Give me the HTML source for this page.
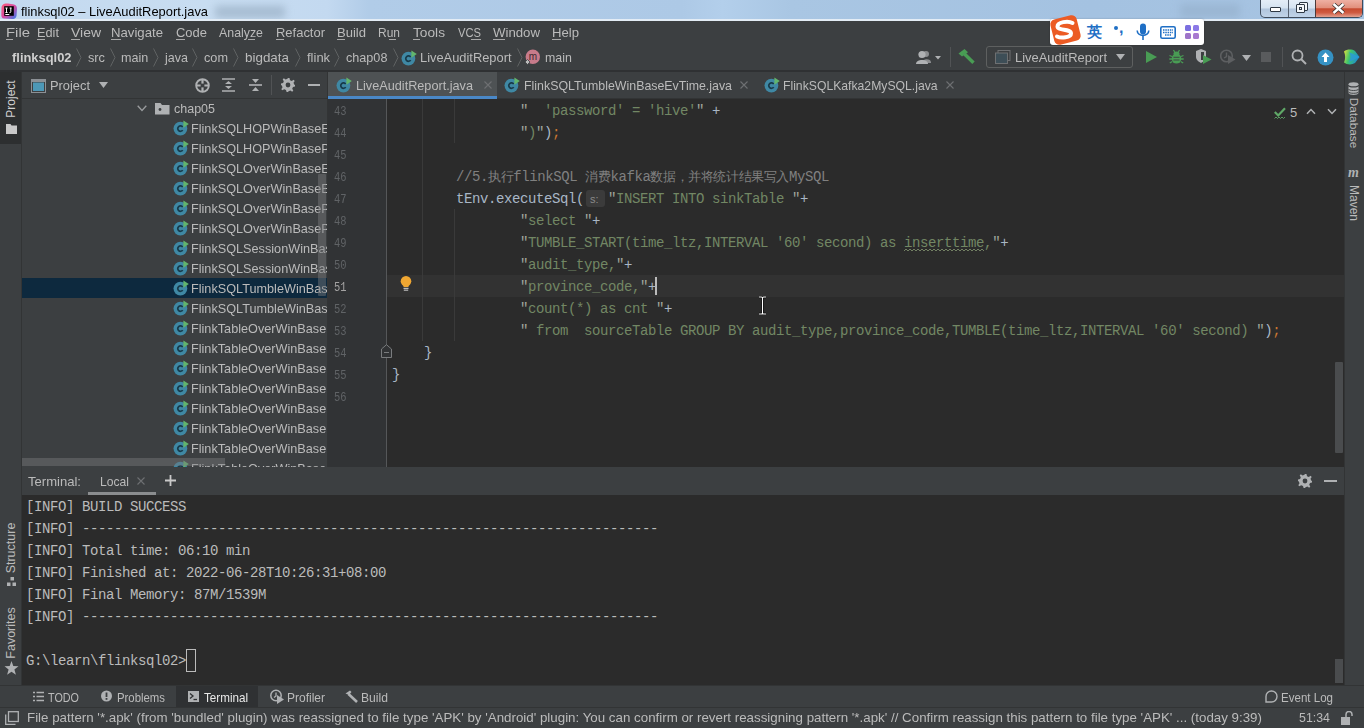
<!DOCTYPE html>
<html><head><meta charset="utf-8"><title>IDE</title><style>*{margin:0;padding:0;box-sizing:border-box}
html,body{width:1364px;height:728px;overflow:hidden;background:#3c3f41;font-family:"Liberation Sans",sans-serif;font-size:13px;color:#bbbbbb;position:relative}
.a{position:absolute}
.t{white-space:pre}
.mono{font-family:"Liberation Mono",monospace;font-size:14px;letter-spacing:-0.4px;line-height:22px;white-space:pre;color:#a9b7c6;margin-top:1px}
.tm{color:#bbbbbb}
.s{color:#728764}
.c{color:#808080}
.k{color:#cc7832}
.q{color:#a0a69c}
.cjk{font-size:13.3px;letter-spacing:-0.4px}
</style></head><body>
<div class="a" style="left:0;top:0;width:1364px;height:21px;background:linear-gradient(90deg,#c3d9ef 0%,#c8ddf1 15%,#c3d9f0 24%,#b1cce8 27%,#adc9e6 50%,#b3cfeb 53%,#a9c6e3 58%,#a4c2e1 80%,#a7c4e2 100%)"></div>
<div class="a" style="left:215px;top:6px;width:70px;height:12px;background:#8aa0b6;filter:blur(4px);opacity:.55"></div>
<div class="a" style="left:1180px;top:4px;width:60px;height:14px;background:#8fa9c4;filter:blur(4px);opacity:.5"></div>
<div class="a" style="left:0;top:19px;width:1364px;height:2px;background:#e3ecf5"></div>
<svg class="a" style="left:1px;top:3px" width="16" height="16" viewBox="0 0 16 16"><defs><linearGradient id="ijg" x1="0" y1="0" x2="1" y2="1"><stop offset="0" stop-color="#fc5f7a"/><stop offset=".5" stop-color="#d84aa0"/><stop offset="1" stop-color="#2f7ff0"/></linearGradient></defs><path d="M0.5 5 C0.5 1 4 0 7 0.5 L13 1.5 C15.5 2 16 4 16 6 L15.5 13 C15 15.5 13 16 11 16 L3 15.5 C1 15.3 0.3 14 0.3 12Z" fill="url(#ijg)"/><rect x="3.2" y="3.2" width="9.6" height="9.6" fill="#000"/><rect x="4.3" y="11" width="4" height="1" fill="#fff"/><path d="M4.4 5 H6.6 M5.5 5 V9.5 M4.4 9.5 H6.6 M8.6 5 H10.6 M9.8 5 V8.8 C9.8 9.6 9.2 9.8 8.4 9.6" stroke="#fff" stroke-width="1" fill="none"/></svg>
<div class="a" style="left:1260px;top:0;width:103px;height:18px;border:1px solid #3f4b5b;border-top:none;border-radius:0 0 5px 5px;overflow:hidden;background:linear-gradient(#e4edf7 0%,#d5e3f1 48%,#b1c5dc 52%,#c0d3e8 100%)">
  <div class="a" style="left:54px;top:0;width:48px;height:17px;background:linear-gradient(#eeb0a3 0%,#e2907d 45%,#c64a30 52%,#cf5b42 75%,#e3a190 100%);border-left:1px solid #4b3a3a"></div>
  <div class="a" style="left:27px;top:0;width:1px;height:17px;background:#55606f"></div>
  <div class="a" style="left:9px;top:7px;width:11px;height:5px;background:#fff;border:1px solid #2f3945;border-radius:1px"></div>
  <div class="a" style="left:38px;top:2px;width:9px;height:9px;border:1px solid #2f3945;background:#f4f7fa;border-radius:1px"></div>
  <div class="a" style="left:35px;top:4px;width:9px;height:9px;border:1px solid #2f3945;background:#f4f7fa;border-radius:1px"></div>
  <div class="a" style="left:38px;top:7px;width:3px;height:3px;border:1px solid #2f3945"></div>
  <svg class="a" style="left:71px;top:3px" width="13" height="11" viewBox="0 0 13 11"><path d="M1.5 1 L11.5 10 M11.5 1 L1.5 10" stroke="#38302f" stroke-width="4"/><path d="M1.5 1 L11.5 10 M11.5 1 L1.5 10" stroke="#fff" stroke-width="2.4"/></svg>
</div>
<div class="a" style="left:0;top:21px;width:1364px;height:51px;background:#3c3f41"></div>
<div class="a" style="left:6px;top:39px;width:7px;height:1px;background:#a8a8a8"></div>
<div class="a" style="left:37px;top:39px;width:8px;height:1px;background:#a8a8a8"></div>
<div class="a" style="left:71px;top:39px;width:9px;height:1px;background:#a8a8a8"></div>
<div class="a" style="left:111px;top:39px;width:10px;height:1px;background:#a8a8a8"></div>
<div class="a" style="left:176px;top:39px;width:9px;height:1px;background:#a8a8a8"></div>
<div class="a" style="left:248px;top:39px;width:7px;height:1px;background:#a8a8a8"></div>
<div class="a" style="left:276px;top:39px;width:8px;height:1px;background:#a8a8a8"></div>
<div class="a" style="left:337px;top:39px;width:8px;height:1px;background:#a8a8a8"></div>
<div class="a" style="left:389px;top:39px;width:7px;height:1px;background:#a8a8a8"></div>
<div class="a" style="left:413px;top:39px;width:7px;height:1px;background:#a8a8a8"></div>
<div class="a" style="left:471px;top:39px;width:10px;height:1px;background:#a8a8a8"></div>
<div class="a" style="left:493px;top:39px;width:12px;height:1px;background:#a8a8a8"></div>
<div class="a" style="left:552px;top:39px;width:9px;height:1px;background:#a8a8a8"></div>
<svg class="a" style="left:76px;top:48px" width="6" height="19" viewBox="0 0 6 19"><path d="M0.5 0.5 L5 9.5 L0.5 18.5" stroke="#5f6263" stroke-width="1" fill="none"/></svg>
<svg class="a" style="left:109.5px;top:48px" width="6" height="19" viewBox="0 0 6 19"><path d="M0.5 0.5 L5 9.5 L0.5 18.5" stroke="#5f6263" stroke-width="1" fill="none"/></svg>
<svg class="a" style="left:153px;top:48px" width="6" height="19" viewBox="0 0 6 19"><path d="M0.5 0.5 L5 9.5 L0.5 18.5" stroke="#5f6263" stroke-width="1" fill="none"/></svg>
<svg class="a" style="left:192px;top:48px" width="6" height="19" viewBox="0 0 6 19"><path d="M0.5 0.5 L5 9.5 L0.5 18.5" stroke="#5f6263" stroke-width="1" fill="none"/></svg>
<svg class="a" style="left:233px;top:48px" width="6" height="19" viewBox="0 0 6 19"><path d="M0.5 0.5 L5 9.5 L0.5 18.5" stroke="#5f6263" stroke-width="1" fill="none"/></svg>
<svg class="a" style="left:295px;top:48px" width="6" height="19" viewBox="0 0 6 19"><path d="M0.5 0.5 L5 9.5 L0.5 18.5" stroke="#5f6263" stroke-width="1" fill="none"/></svg>
<svg class="a" style="left:334px;top:48px" width="6" height="19" viewBox="0 0 6 19"><path d="M0.5 0.5 L5 9.5 L0.5 18.5" stroke="#5f6263" stroke-width="1" fill="none"/></svg>
<svg class="a" style="left:393px;top:48px" width="6" height="19" viewBox="0 0 6 19"><path d="M0.5 0.5 L5 9.5 L0.5 18.5" stroke="#5f6263" stroke-width="1" fill="none"/></svg>
<svg class="a" style="left:516.5px;top:48px" width="6" height="19" viewBox="0 0 6 19"><path d="M0.5 0.5 L5 9.5 L0.5 18.5" stroke="#5f6263" stroke-width="1" fill="none"/></svg>
<svg class="a" style="left:401px;top:50px" width="16" height="16" viewBox="0 0 16 16"><circle cx="7.4" cy="8.6" r="6.9" fill="#3f88a4"/><path d="M9.7 7.1 A2.7 2.7 0 1 0 9.7 10.1" stroke="#183a4a" stroke-width="1.7" fill="none"/><path d="M10.4 0.4 L15.8 4.1 L10.4 7.8 Z" fill="#62b56d"/></svg>
<svg class="a" style="left:524px;top:49px" width="17" height="17" viewBox="0 0 17 17"><circle cx="8.8" cy="7.8" r="7.2" fill="#c77b8b"/><text x="8.8" y="11.2" font-size="10" font-family="Liberation Sans" fill="#3c2a30" text-anchor="middle">m</text><path d="M1 13 L3.5 10.5 L6 13 L3.5 15.5Z" fill="#bbb" stroke="#3c3f41" stroke-width="0.8"/></svg>
<div class="a" style="left:0;top:70px;width:1364px;height:2px;background:#2f3133"></div>
<svg class="a" style="left:916px;top:50px" width="26" height="14" viewBox="0 0 26 14"><circle cx="10" cy="4" r="3" fill="#8c8e90"/><path d="M6 13 C6 8.5 15 8 15 12.5 V13Z" fill="#8c8e90"/><circle cx="6" cy="4.5" r="3.6" fill="#afb1b3"/><path d="M0 14 C0 8.8 12 8.8 12 14Z" fill="#afb1b3"/><path d="M19 6 L25 6 L22 9.5Z" fill="#afb1b3"/></svg>
<div class="a" style="left:950px;top:47px;width:1px;height:20px;background:#515355"></div>
<svg class="a" style="left:958px;top:49px" width="17" height="15" viewBox="0 0 17 15"><path d="M0.5 4.5 L6.5 0 L10 3.2 L4 7.5 Z" fill="#499c54"/><path d="M6 4.5 L15.5 13.8" stroke="#499c54" stroke-width="3.4"/></svg>
<div class="a" style="left:986px;top:46px;width:147px;height:22px;border:1px solid #5e6060;border-radius:3px"></div>
<svg class="a" style="left:995px;top:50px" width="16" height="14" viewBox="0 0 16 14"><rect x="3" y="0.5" width="12" height="10" fill="none" stroke="#6e7072"/><rect x="0.5" y="3" width="12" height="10.5" fill="#3d4e57" stroke="#6e7072"/></svg>
<svg class="a" style="left:1116px;top:54px" width="9" height="6" viewBox="0 0 9 6"><path d="M0 0 H9 L4.5 6Z" fill="#afb1b3"/></svg>
<svg class="a" style="left:1146px;top:51px" width="11" height="12" viewBox="0 0 11 12"><path d="M0 0 L11 6 L0 12Z" fill="#499c54"/></svg>
<svg class="a" style="left:1169px;top:49px" width="15" height="15" viewBox="0 0 15 15"><path d="M4.5 1 L6 3.5 M10.5 1 L9 3.5" stroke="#499c54" stroke-width="1.3"/><ellipse cx="7.5" cy="4.6" rx="3" ry="2.2" fill="#499c54"/><ellipse cx="7.5" cy="9.6" rx="4.8" ry="5" fill="#499c54"/><path d="M0.5 6.5 L3 7.5 M14.5 6.5 L12 7.5 M0.3 10 H3 M14.7 10 H12 M0.8 14 L3.3 12.5 M14.2 14 L11.7 12.5" stroke="#499c54" stroke-width="1.3"/><path d="M4.5 8.3 H10.5 M4.5 11 H10.5" stroke="#3c3f41" stroke-width="0.9"/></svg>
<svg class="a" style="left:1195px;top:49px" width="17" height="15" viewBox="0 0 17 15"><path d="M1 2 L6 0 L11 2 V8 C11 11 8 13 6 14 C4 13 1 11 1 8Z" fill="#afb1b3"/><rect x="6" y="3" width="3" height="8" fill="#3c3f41"/><path d="M8 6 L16.5 10.5 L8 15Z" fill="#499c54"/></svg>
<svg class="a" style="left:1220px;top:49px" width="16" height="15" viewBox="0 0 16 15"><circle cx="6.5" cy="7" r="5.8" fill="none" stroke="#5d5f61" stroke-width="1.6"/><path d="M6.5 3.5 V7.5 L4 9" stroke="#5d5f61" stroke-width="1.4" fill="none"/><path d="M8 6 L15.5 10.5 L8 15Z" fill="#5d5f61"/></svg>
<svg class="a" style="left:1242px;top:55px" width="9" height="6" viewBox="0 0 9 6"><path d="M0 0 H9 L4.5 6Z" fill="#afb1b3"/></svg>
<div class="a" style="left:1261px;top:52px;width:10px;height:10px;background:#595b5d"></div>
<div class="a" style="left:1282px;top:47px;width:1px;height:20px;background:#515355"></div>
<svg class="a" style="left:1291px;top:49px" width="16" height="16" viewBox="0 0 16 16"><circle cx="6.5" cy="6.5" r="5" fill="none" stroke="#afb1b3" stroke-width="1.8"/><path d="M10 10 L15 15" stroke="#afb1b3" stroke-width="2"/></svg>
<svg class="a" style="left:1317px;top:49px" width="17" height="17" viewBox="0 0 17 17"><circle cx="8.5" cy="8.5" r="8" fill="#3592c4"/><path d="M8.5 3.5 L12.5 8 H10 V13 H7 V8 H4.5Z" fill="#fff"/></svg>
<svg class="a" style="left:1343px;top:49px" width="17" height="16" viewBox="0 0 17 16"><defs><linearGradient id="gcol" x1="0" y1="0" x2="1" y2="0.3"><stop offset="0" stop-color="#e8e23a"/><stop offset="0.45" stop-color="#3ec46d"/><stop offset="1" stop-color="#1e8fd0"/></linearGradient></defs><path d="M1 2.5 C4 0 9 0 12 2 L16.5 8 L12 14 C9 16 4 16 1 13.5 C2.5 10 2.5 6 1 2.5Z" fill="url(#gcol)"/><path d="M6 3 L16.5 8 L6 13 C8 9.5 8 6.5 6 3Z" fill="#2a9bd6" opacity="0.85"/></svg>

<div class="a" style="left:1050px;top:19px;width:154px;height:26px;background:#fff;border-radius:3px;box-shadow:0 0 2px rgba(0,0,0,.25)"></div>
<svg class="a" style="left:1049px;top:14px" width="34" height="32" viewBox="0 0 34 32"><rect x="3" y="3" width="27" height="26" rx="5" transform="rotate(-14 16.5 16)" fill="#ec5b24"/><path d="M23.5 9 C19 6.5 8.5 8 8.5 12.5 C8.5 17 22 14.5 22 19.5 C22 23.5 12 24.5 8 22.5" stroke="#fff" stroke-width="4" fill="none" stroke-linecap="round"/></svg>
<div class="a" style="left:1087px;top:22px;font:bold 15px 'Liberation Sans',sans-serif;color:#1f6fc5;line-height:20px">英</div>
<div class="a" style="left:1114px;top:26px;width:4px;height:4px;border-radius:2px;background:#1f6fc5"></div>
<div class="a" style="left:1119px;top:18px;font:bold 16px 'Liberation Sans',sans-serif;color:#1f6fc5;line-height:20px">,</div>
<svg class="a" style="left:1136px;top:23px" width="14" height="18" viewBox="0 0 14 18"><rect x="4" y="0.5" width="6" height="11" rx="3" fill="#1f6fc5"/><path d="M1.2 7.5 C1.2 14 12.8 14 12.8 7.5" stroke="#1f6fc5" stroke-width="1.6" fill="none"/><path d="M7 12.5 V17" stroke="#1f6fc5" stroke-width="1.6"/></svg>
<svg class="a" style="left:1160px;top:26px" width="16" height="13" viewBox="0 0 16 13"><rect x="0.8" y="0.8" width="14.4" height="11.4" rx="1.5" fill="none" stroke="#1f6fc5" stroke-width="1.6"/><path d="M3 4 H13 M3 6.5 H13 M5 9 H11" stroke="#1f6fc5" stroke-width="1.4" stroke-dasharray="1.5 0.8"/></svg>
<svg class="a" style="left:1185px;top:25px" width="14" height="14" viewBox="0 0 14 14"><rect x="0" y="0" width="6" height="6" rx="1.5" fill="#7b6fe0"/><rect x="8" y="0" width="6" height="6" rx="1.5" fill="#8c79e6"/><rect x="0" y="8" width="6" height="6" rx="1.5" fill="#9e74c9"/><rect x="8" y="8" width="6" height="6" rx="1.5" fill="#a87ad0"/></svg>

<div class="a" style="left:0;top:72px;width:21px;height:614px;background:#3c3f41"></div>
<div class="a" style="left:21px;top:72px;width:1px;height:614px;background:#323435"></div>
<div class="a" style="left:0;top:72px;width:21px;height:72px;background:#2d2f30"></div>
<div class="a t" style="left:-19px;top:92px;width:60px;height:14px;line-height:14px;text-align:center;transform:rotate(-90deg);color:#d0d0d0;font-size:12px">Project</div>
<svg class="a" style="left:6px;top:124px" width="11" height="10" viewBox="0 0 11 10"><path d="M0 0 H4.5 L5.5 1.5 H11 V10 H0Z" fill="#c9c9c9"/></svg>
<div class="a t" style="left:-19px;top:541px;width:60px;height:14px;line-height:14px;text-align:center;transform:rotate(-90deg);color:#bbbbbb;font-size:12.5px">Structure</div>
<svg class="a" style="left:7px;top:577px" width="10" height="10" viewBox="0 0 10 10"><rect x="3.5" y="0" width="3.5" height="3.5" fill="#afb1b3"/><rect x="0" y="5.5" width="3.5" height="3.5" fill="#afb1b3"/><rect x="5.5" y="5.5" width="3.5" height="3.5" fill="#afb1b3"/></svg>
<div class="a t" style="left:-19px;top:626px;width:60px;height:14px;line-height:14px;text-align:center;transform:rotate(-90deg);color:#bbbbbb;font-size:12.5px">Favorites</div>
<svg class="a" style="left:4px;top:661px" width="15" height="14" viewBox="0 0 15 14"><path d="M7.5 0 L9.3 5 L14.5 5.2 L10.4 8.5 L11.9 13.7 L7.5 10.7 L3.1 13.7 L4.6 8.5 L0.5 5.2 L5.7 5Z" fill="#afb1b3"/></svg>

<div class="a" style="left:22px;top:72px;width:306px;height:395px;background:#3c3f41"></div>
<div class="a" style="left:22px;top:98px;width:306px;height:1px;background:#323435"></div>
<svg class="a" style="left:31px;top:79px" width="15" height="14" viewBox="0 0 15 14"><rect x="0.5" y="0.5" width="14" height="13" fill="none" stroke="#8c9095"/><rect x="1" y="1" width="13" height="2" fill="#8c9095"/><rect x="2" y="3.5" width="11" height="8.5" fill="#4d98b7"/></svg>
<svg class="a" style="left:99px;top:82px" width="9" height="6" viewBox="0 0 9 6"><path d="M0 0 H9 L4.5 6Z" fill="#afb1b3"/></svg>
<svg class="a" style="left:195px;top:78px" width="15" height="15" viewBox="0 0 15 15"><circle cx="7.5" cy="7.5" r="6.3" fill="none" stroke="#afb1b3" stroke-width="1.9"/><path d="M7.5 1 V14 M1 7.5 H14" stroke="#afb1b3" stroke-width="2.2"/><rect x="5.6" y="5.6" width="3.8" height="3.8" fill="#3c3f41"/></svg>
<svg class="a" style="left:222px;top:78px" width="13" height="14" viewBox="0 0 13 14"><path d="M0 1 H13 M0 13 H13" stroke="#afb1b3" stroke-width="1.6"/><path d="M6.5 3 L10 6 H3Z M6.5 11 L10 8 H3Z" fill="#afb1b3"/></svg>
<svg class="a" style="left:249px;top:78px" width="13" height="14" viewBox="0 0 13 14"><path d="M0 7 H13" stroke="#afb1b3" stroke-width="1.6"/><path d="M3 1 H10 L6.5 5Z M3 13 H10 L6.5 9Z" fill="#afb1b3"/></svg>
<div class="a" style="left:271px;top:75px;width:1px;height:20px;background:#515355"></div>
<svg class="a" style="left:281px;top:78px" width="14" height="14" viewBox="0 0 14 14"><path d="M7 0 L8.5 0 L9 2.2 L10.8 3 L12.6 1.8 L13.7 2.9 L12.5 4.8 L13.2 6.5 L14 7 L14 8.4 L12 9 L11.2 10.8 L12.3 12.6 L11.2 13.7 L9.3 12.5 L7.6 13.2 L7 14 L5.6 14 L5 11.9 L3.2 11.2 L1.4 12.3 L0.3 11.2 L1.5 9.3 L0.8 7.6 L0 7 L0 5.6 L2.1 5 L2.8 3.2 L1.7 1.4 L2.8 0.3 L4.7 1.5 L6.4 0.8Z" fill="#afb1b3"/><circle cx="7" cy="7" r="2.4" fill="#3c3f41"/></svg>
<div class="a" style="left:308px;top:84px;width:12px;height:2px;background:#afb1b3"></div>

<div class="a" style="left:22px;top:278px;width:305px;height:20px;background:#0d293e"></div>
<svg class="a" style="left:137px;top:105px" width="10" height="7" viewBox="0 0 10 7"><path d="M0.7 0.7 L5 5.5 L9.3 0.7" stroke="#9a9c9e" stroke-width="1.3" fill="none"/></svg>
<svg class="a" style="left:155px;top:103px" width="15" height="12" viewBox="0 0 15 12"><path d="M0 0 H5.5 L7 2 H14.5 V11.5 H0Z" fill="#afb1b3"/><circle cx="5" cy="6.5" r="1.4" fill="#3c3f41"/></svg>
<div class="a" style="left:22px;top:98px;width:305px;height:369px;overflow:hidden"><svg class="a" style="left:151px;top:22px" width="16" height="16" viewBox="0 0 16 16"><circle cx="7.4" cy="8.6" r="6.9" fill="#3f88a4"/><path d="M9.7 7.1 A2.7 2.7 0 1 0 9.7 10.1" stroke="#183a4a" stroke-width="1.7" fill="none"/><path d="M10.4 0.4 L15.8 4.1 L10.4 7.8 Z" fill="#62b56d"/></svg><div class="a t" style="left:168.8px;top:21px;height:20px;line-height:20px;font:normal 13px/20px 'Liberation Sans',sans-serif;color:#bbbbbb;transform:scaleX(0.9746);transform-origin:0 0;">FlinkSQLHOPWinBaseEvTime</div><svg class="a" style="left:151px;top:42px" width="16" height="16" viewBox="0 0 16 16"><circle cx="7.4" cy="8.6" r="6.9" fill="#3f88a4"/><path d="M9.7 7.1 A2.7 2.7 0 1 0 9.7 10.1" stroke="#183a4a" stroke-width="1.7" fill="none"/><path d="M10.4 0.4 L15.8 4.1 L10.4 7.8 Z" fill="#62b56d"/></svg><div class="a t" style="left:168.8px;top:41px;height:20px;line-height:20px;font:normal 13px/20px 'Liberation Sans',sans-serif;color:#bbbbbb;transform:scaleX(0.9746);transform-origin:0 0;">FlinkSQLHOPWinBasePtTime</div><svg class="a" style="left:151px;top:62px" width="16" height="16" viewBox="0 0 16 16"><circle cx="7.4" cy="8.6" r="6.9" fill="#3f88a4"/><path d="M9.7 7.1 A2.7 2.7 0 1 0 9.7 10.1" stroke="#183a4a" stroke-width="1.7" fill="none"/><path d="M10.4 0.4 L15.8 4.1 L10.4 7.8 Z" fill="#62b56d"/></svg><div class="a t" style="left:168.8px;top:61px;height:20px;line-height:20px;font:normal 13px/20px 'Liberation Sans',sans-serif;color:#bbbbbb;transform:scaleX(0.9746);transform-origin:0 0;">FlinkSQLOverWinBaseEvTime</div><svg class="a" style="left:151px;top:82px" width="16" height="16" viewBox="0 0 16 16"><circle cx="7.4" cy="8.6" r="6.9" fill="#3f88a4"/><path d="M9.7 7.1 A2.7 2.7 0 1 0 9.7 10.1" stroke="#183a4a" stroke-width="1.7" fill="none"/><path d="M10.4 0.4 L15.8 4.1 L10.4 7.8 Z" fill="#62b56d"/></svg><div class="a t" style="left:168.8px;top:81px;height:20px;line-height:20px;font:normal 13px/20px 'Liberation Sans',sans-serif;color:#bbbbbb;transform:scaleX(0.9746);transform-origin:0 0;">FlinkSQLOverWinBaseEvTime2</div><svg class="a" style="left:151px;top:102px" width="16" height="16" viewBox="0 0 16 16"><circle cx="7.4" cy="8.6" r="6.9" fill="#3f88a4"/><path d="M9.7 7.1 A2.7 2.7 0 1 0 9.7 10.1" stroke="#183a4a" stroke-width="1.7" fill="none"/><path d="M10.4 0.4 L15.8 4.1 L10.4 7.8 Z" fill="#62b56d"/></svg><div class="a t" style="left:168.8px;top:101px;height:20px;line-height:20px;font:normal 13px/20px 'Liberation Sans',sans-serif;color:#bbbbbb;transform:scaleX(0.9746);transform-origin:0 0;">FlinkSQLOverWinBasePtTime</div><svg class="a" style="left:151px;top:122px" width="16" height="16" viewBox="0 0 16 16"><circle cx="7.4" cy="8.6" r="6.9" fill="#3f88a4"/><path d="M9.7 7.1 A2.7 2.7 0 1 0 9.7 10.1" stroke="#183a4a" stroke-width="1.7" fill="none"/><path d="M10.4 0.4 L15.8 4.1 L10.4 7.8 Z" fill="#62b56d"/></svg><div class="a t" style="left:168.8px;top:121px;height:20px;line-height:20px;font:normal 13px/20px 'Liberation Sans',sans-serif;color:#bbbbbb;transform:scaleX(0.9746);transform-origin:0 0;">FlinkSQLOverWinBasePtTime2</div><svg class="a" style="left:151px;top:142px" width="16" height="16" viewBox="0 0 16 16"><circle cx="7.4" cy="8.6" r="6.9" fill="#3f88a4"/><path d="M9.7 7.1 A2.7 2.7 0 1 0 9.7 10.1" stroke="#183a4a" stroke-width="1.7" fill="none"/><path d="M10.4 0.4 L15.8 4.1 L10.4 7.8 Z" fill="#62b56d"/></svg><div class="a t" style="left:168.8px;top:141px;height:20px;line-height:20px;font:normal 13px/20px 'Liberation Sans',sans-serif;color:#bbbbbb;transform:scaleX(0.9746);transform-origin:0 0;">FlinkSQLSessionWinBaseEvTime</div><svg class="a" style="left:151px;top:162px" width="16" height="16" viewBox="0 0 16 16"><circle cx="7.4" cy="8.6" r="6.9" fill="#3f88a4"/><path d="M9.7 7.1 A2.7 2.7 0 1 0 9.7 10.1" stroke="#183a4a" stroke-width="1.7" fill="none"/><path d="M10.4 0.4 L15.8 4.1 L10.4 7.8 Z" fill="#62b56d"/></svg><div class="a t" style="left:168.8px;top:161px;height:20px;line-height:20px;font:normal 13px/20px 'Liberation Sans',sans-serif;color:#bbbbbb;transform:scaleX(0.9746);transform-origin:0 0;">FlinkSQLSessionWinBasePtTime</div><svg class="a" style="left:151px;top:182px" width="16" height="16" viewBox="0 0 16 16"><circle cx="7.4" cy="8.6" r="6.9" fill="#3f88a4"/><path d="M9.7 7.1 A2.7 2.7 0 1 0 9.7 10.1" stroke="#183a4a" stroke-width="1.7" fill="none"/><path d="M10.4 0.4 L15.8 4.1 L10.4 7.8 Z" fill="#62b56d"/></svg><div class="a t" style="left:168.8px;top:181px;height:20px;line-height:20px;font:normal 13px/20px 'Liberation Sans',sans-serif;color:#bbbbbb;transform:scaleX(0.9746);transform-origin:0 0;">FlinkSQLTumbleWinBaseEvTime</div><svg class="a" style="left:151px;top:202px" width="16" height="16" viewBox="0 0 16 16"><circle cx="7.4" cy="8.6" r="6.9" fill="#3f88a4"/><path d="M9.7 7.1 A2.7 2.7 0 1 0 9.7 10.1" stroke="#183a4a" stroke-width="1.7" fill="none"/><path d="M10.4 0.4 L15.8 4.1 L10.4 7.8 Z" fill="#62b56d"/></svg><div class="a t" style="left:168.8px;top:201px;height:20px;line-height:20px;font:normal 13px/20px 'Liberation Sans',sans-serif;color:#bbbbbb;transform:scaleX(0.9746);transform-origin:0 0;">FlinkSQLTumbleWinBasePtTime</div><svg class="a" style="left:151px;top:222px" width="16" height="16" viewBox="0 0 16 16"><circle cx="7.4" cy="8.6" r="6.9" fill="#3f88a4"/><path d="M9.7 7.1 A2.7 2.7 0 1 0 9.7 10.1" stroke="#183a4a" stroke-width="1.7" fill="none"/><path d="M10.4 0.4 L15.8 4.1 L10.4 7.8 Z" fill="#62b56d"/></svg><div class="a t" style="left:168.8px;top:221px;height:20px;line-height:20px;font:normal 13px/20px 'Liberation Sans',sans-serif;color:#bbbbbb;transform:scaleX(0.9746);transform-origin:0 0;">FlinkTableOverWinBaseEvTime</div><svg class="a" style="left:151px;top:242px" width="16" height="16" viewBox="0 0 16 16"><circle cx="7.4" cy="8.6" r="6.9" fill="#3f88a4"/><path d="M9.7 7.1 A2.7 2.7 0 1 0 9.7 10.1" stroke="#183a4a" stroke-width="1.7" fill="none"/><path d="M10.4 0.4 L15.8 4.1 L10.4 7.8 Z" fill="#62b56d"/></svg><div class="a t" style="left:168.8px;top:241px;height:20px;line-height:20px;font:normal 13px/20px 'Liberation Sans',sans-serif;color:#bbbbbb;transform:scaleX(0.9746);transform-origin:0 0;">FlinkTableOverWinBaseEvTime2</div><svg class="a" style="left:151px;top:262px" width="16" height="16" viewBox="0 0 16 16"><circle cx="7.4" cy="8.6" r="6.9" fill="#3f88a4"/><path d="M9.7 7.1 A2.7 2.7 0 1 0 9.7 10.1" stroke="#183a4a" stroke-width="1.7" fill="none"/><path d="M10.4 0.4 L15.8 4.1 L10.4 7.8 Z" fill="#62b56d"/></svg><div class="a t" style="left:168.8px;top:261px;height:20px;line-height:20px;font:normal 13px/20px 'Liberation Sans',sans-serif;color:#bbbbbb;transform:scaleX(0.9746);transform-origin:0 0;">FlinkTableOverWinBaseEvTime3</div><svg class="a" style="left:151px;top:282px" width="16" height="16" viewBox="0 0 16 16"><circle cx="7.4" cy="8.6" r="6.9" fill="#3f88a4"/><path d="M9.7 7.1 A2.7 2.7 0 1 0 9.7 10.1" stroke="#183a4a" stroke-width="1.7" fill="none"/><path d="M10.4 0.4 L15.8 4.1 L10.4 7.8 Z" fill="#62b56d"/></svg><div class="a t" style="left:168.8px;top:281px;height:20px;line-height:20px;font:normal 13px/20px 'Liberation Sans',sans-serif;color:#bbbbbb;transform:scaleX(0.9746);transform-origin:0 0;">FlinkTableOverWinBasePtTime</div><svg class="a" style="left:151px;top:302px" width="16" height="16" viewBox="0 0 16 16"><circle cx="7.4" cy="8.6" r="6.9" fill="#3f88a4"/><path d="M9.7 7.1 A2.7 2.7 0 1 0 9.7 10.1" stroke="#183a4a" stroke-width="1.7" fill="none"/><path d="M10.4 0.4 L15.8 4.1 L10.4 7.8 Z" fill="#62b56d"/></svg><div class="a t" style="left:168.8px;top:301px;height:20px;line-height:20px;font:normal 13px/20px 'Liberation Sans',sans-serif;color:#bbbbbb;transform:scaleX(0.9746);transform-origin:0 0;">FlinkTableOverWinBasePtTime2</div><svg class="a" style="left:151px;top:322px" width="16" height="16" viewBox="0 0 16 16"><circle cx="7.4" cy="8.6" r="6.9" fill="#3f88a4"/><path d="M9.7 7.1 A2.7 2.7 0 1 0 9.7 10.1" stroke="#183a4a" stroke-width="1.7" fill="none"/><path d="M10.4 0.4 L15.8 4.1 L10.4 7.8 Z" fill="#62b56d"/></svg><div class="a t" style="left:168.8px;top:321px;height:20px;line-height:20px;font:normal 13px/20px 'Liberation Sans',sans-serif;color:#bbbbbb;transform:scaleX(0.9746);transform-origin:0 0;">FlinkTableOverWinBasePtTime3</div><svg class="a" style="left:151px;top:342px" width="16" height="16" viewBox="0 0 16 16"><circle cx="7.4" cy="8.6" r="6.9" fill="#3f88a4"/><path d="M9.7 7.1 A2.7 2.7 0 1 0 9.7 10.1" stroke="#183a4a" stroke-width="1.7" fill="none"/><path d="M10.4 0.4 L15.8 4.1 L10.4 7.8 Z" fill="#62b56d"/></svg><div class="a t" style="left:168.8px;top:341px;height:20px;line-height:20px;font:normal 13px/20px 'Liberation Sans',sans-serif;color:#bbbbbb;transform:scaleX(0.9746);transform-origin:0 0;">FlinkTableOverWinBaseRows</div><svg class="a" style="left:151px;top:362px" width="16" height="16" viewBox="0 0 16 16"><circle cx="7.4" cy="8.6" r="6.9" fill="#3f88a4"/><path d="M9.7 7.1 A2.7 2.7 0 1 0 9.7 10.1" stroke="#183a4a" stroke-width="1.7" fill="none"/><path d="M10.4 0.4 L15.8 4.1 L10.4 7.8 Z" fill="#62b56d"/></svg><div class="a t" style="left:168.8px;top:361px;height:20px;line-height:20px;font:normal 13px/20px 'Liberation Sans',sans-serif;color:#bbbbbb;transform:scaleX(0.9746);transform-origin:0 0;">FlinkTableOverWinBaseRows2</div></div>
<div class="a" style="left:318px;top:174px;width:8px;height:122px;background:rgba(120,123,125,0.45);border-radius:1px"></div>
<div class="a" style="left:22px;top:458px;width:203px;height:8px;background:rgba(120,123,125,0.45)"></div>
<div class="a" style="left:328px;top:72px;width:1017px;height:27px;background:#3c3f41"></div>
<div class="a" style="left:328px;top:98px;width:1017px;height:1px;background:#323435"></div>
<div class="a" style="left:328px;top:72px;width:169px;height:24px;background:#4e5254"></div>
<div class="a" style="left:328px;top:96px;width:169px;height:3px;background:#4a88c7"></div>
<div class="a" style="left:327px;top:72px;width:1px;height:395px;background:#323435"></div>

<svg class="a" style="left:336px;top:77px" width="16" height="16" viewBox="0 0 16 16"><circle cx="7.4" cy="8.6" r="6.9" fill="#3f88a4"/><path d="M9.7 7.1 A2.7 2.7 0 1 0 9.7 10.1" stroke="#183a4a" stroke-width="1.7" fill="none"/><path d="M10.4 0.4 L15.8 4.1 L10.4 7.8 Z" fill="#62b56d"/></svg>
<svg class="a" style="left:504px;top:77px" width="16" height="16" viewBox="0 0 16 16"><circle cx="7.4" cy="8.6" r="6.9" fill="#3f88a4"/><path d="M9.7 7.1 A2.7 2.7 0 1 0 9.7 10.1" stroke="#183a4a" stroke-width="1.7" fill="none"/><path d="M10.4 0.4 L15.8 4.1 L10.4 7.8 Z" fill="#62b56d"/></svg>
<svg class="a" style="left:764px;top:77px" width="16" height="16" viewBox="0 0 16 16"><circle cx="7.4" cy="8.6" r="6.9" fill="#3f88a4"/><path d="M9.7 7.1 A2.7 2.7 0 1 0 9.7 10.1" stroke="#183a4a" stroke-width="1.7" fill="none"/><path d="M10.4 0.4 L15.8 4.1 L10.4 7.8 Z" fill="#62b56d"/></svg>
<svg class="a" style="left:484px;top:81px" width="8" height="8" viewBox="0 0 8 8"><path d="M0.5 0.5 L7.5 7.5 M7.5 0.5 L0.5 7.5" stroke="#6e7072" stroke-width="1.1"/></svg>
<svg class="a" style="left:740px;top:81px" width="8" height="8" viewBox="0 0 8 8"><path d="M0.5 0.5 L7.5 7.5 M7.5 0.5 L0.5 7.5" stroke="#6e7072" stroke-width="1.1"/></svg>
<svg class="a" style="left:946px;top:81px" width="8" height="8" viewBox="0 0 8 8"><path d="M0.5 0.5 L7.5 7.5 M7.5 0.5 L0.5 7.5" stroke="#6e7072" stroke-width="1.1"/></svg>
<div class="a" style="left:328px;top:99px;width:58px;height:368px;background:#313335"></div>
<div class="a" style="left:386px;top:99px;width:1px;height:368px;background:#555759"></div>
<div class="a" style="left:387px;top:99px;width:958px;height:368px;background:#2b2b2b"></div>
<div class="a" style="left:387px;top:275px;width:958px;height:22px;background:#323232"></div>
<div class="a" style="left:422px;top:99px;width:1px;height:242px;background:#3a3a3a"></div>
<div class="a" style="left:454px;top:99px;width:1px;height:44px;background:#3a3a3a"></div>
<div class="a" style="left:454px;top:209px;width:1px;height:132px;background:#3a3a3a"></div>
<svg class="a" style="left:400px;top:276px" width="12" height="15" viewBox="0 0 12 15"><circle cx="6" cy="5.3" r="5.3" fill="#f0a732"/><rect x="3.5" y="9" width="5" height="2" fill="#f0a732"/><rect x="3.5" y="11.8" width="5" height="1.1" fill="#c9c9c9"/><rect x="3.8" y="13.6" width="4.4" height="1.1" fill="#c9c9c9"/></svg>
<svg class="a" style="left:381px;top:344px" width="11" height="14" viewBox="0 0 11 14"><path d="M0.5 5 L5.5 0.7 L10.5 5 V13.5 H0.5Z" fill="#313335" stroke="#7a7c7e" stroke-width="1"/><path d="M3 8.5 H8" stroke="#7a7c7e" stroke-width="1"/></svg>
<div class="a" style="left:655px;top:277px;width:2px;height:18px;background:#bbbbbb"></div>
<svg class="a" style="left:1274px;top:107px" width="12" height="13" viewBox="0 0 12 13"><path d="M0.8 5 L4.2 8.5 L11 1.2" stroke="#5fa867" stroke-width="2.2" fill="none"/><path d="M0.5 11.5 L2 10 L3.5 11.5 L5 10 L6.5 11.5 L8 10 L9.5 11.5 L11 10" stroke="#5fa867" stroke-width="0.9" fill="none"/></svg>
<svg class="a" style="left:1306px;top:108px" width="10" height="7" viewBox="0 0 10 7"><path d="M1 5.8 L5 1.5 L9 5.8" stroke="#afb1b3" stroke-width="1.5" fill="none"/></svg>
<svg class="a" style="left:1327px;top:108px" width="10" height="7" viewBox="0 0 10 7"><path d="M1 1.2 L5 5.5 L9 1.2" stroke="#afb1b3" stroke-width="1.5" fill="none"/></svg>
<div class="a" style="left:1335px;top:362px;width:8px;height:91px;background:#4a4c4e;border-radius:1px"></div>
<svg class="a" style="left:757px;top:296px" width="11" height="19" viewBox="0 0 11 19"><path d="M2 1 H4.5 C5.2 1 5.5 1.5 5.5 2 V17 C5.5 17.5 5.2 18 4.5 18 H2 M9 1 H6.5 C5.8 1 5.5 1.5 5.5 2 M5.5 17 C5.5 17.5 5.8 18 6.5 18 H9" stroke="#000" stroke-width="2.4" fill="none"/><path d="M2 1 H4.5 C5.2 1 5.5 1.5 5.5 2 V17 C5.5 17.5 5.2 18 4.5 18 H2 M9 1 H6.5 C5.8 1 5.5 1.5 5.5 2 M5.5 17 C5.5 17.5 5.8 18 6.5 18 H9" stroke="#fff" stroke-width="1.1" fill="none"/></svg>

<div class="a" style="left:586px;top:190px;width:19px;height:17px;background:#3b3b3b;border-radius:3px"></div>
<div class="a mono" style="left:520px;top:99px"><span class="q">"</span><span class="s">  &#x27;password&#x27; = &#x27;hive&#x27;</span><span class="q">"</span> +</div>
<div class="a mono" style="left:520px;top:121px"><span class="q">"</span><span class="s">)</span><span class="q">"</span>)<span class="k">;</span></div>
<div class="a mono" style="left:456px;top:165px"><span class="c">//5.<span class="cjk">执行</span>flinkSQL <span class="cjk">消费</span>kafka<span class="cjk">数据，并将统计结果写入</span>MySQL</span></div>
<div class="a mono" style="left:456px;top:187px">tEnv.executeSql(</div>
<div class="a mono" style="left:520px;top:209px"><span class="q">"</span><span class="s">select </span><span class="q">"</span>+</div>
<div class="a mono" style="left:520px;top:231px"><span class="q">"</span><span class="s">TUMBLE_START(time_ltz,INTERVAL '60' second) as <span class="typo">inserttime</span>,</span><span class="q">"</span>+</div>
<div class="a mono" style="left:520px;top:253px"><span class="q">"</span><span class="s">audit_type,</span><span class="q">"</span>+</div>
<div class="a mono" style="left:520px;top:275px"><span class="q">"</span><span class="s">province_code,</span><span class="q">"</span>+</div>
<div class="a mono" style="left:520px;top:297px"><span class="q">"</span><span class="s">count(*) as cnt </span><span class="q">"</span>+</div>
<div class="a mono" style="left:520px;top:319px"><span class="q">"</span><span class="s"> from  sourceTable GROUP BY audit_type,province_code,TUMBLE(time_ltz,INTERVAL &#x27;60&#x27; second) </span><span class="q">"</span>)<span class="k">;</span></div>
<div class="a mono" style="left:424px;top:341px">}</div>
<div class="a mono" style="left:392px;top:363px">}</div>
<div class="a mono" style="left:608px;top:187px"><span class="q">"</span><span class="s">INSERT INTO sinkTable </span><span class="q">"</span>+</div>
<svg class="a" style="left:904px;top:248px" width="80" height="4" viewBox="0 0 80 4"><path d="M0 3 L2 1 L4 3 L6 1 L8 3 L10 1 L12 3 L14 1 L16 3 L18 1 L20 3 L22 1 L24 3 L26 1 L28 3 L30 1 L32 3 L34 1 L36 3 L38 1 L40 3 L42 1 L44 3 L46 1 L48 3 L50 1 L52 3 L54 1 L56 3 L58 1 L60 3 L62 1 L64 3 L66 1 L68 3 L70 1 L72 3 L74 1 L76 3 L78 1 L80 3" stroke="#7a8a6a" stroke-width="0.9" fill="none"/></svg>
<div class="a" style="left:1345px;top:72px;width:19px;height:614px;background:#3c3f41"></div>
<div class="a" style="left:1344px;top:72px;width:1px;height:614px;background:#323435"></div>
<svg class="a" style="left:1348px;top:82px" width="11" height="13" viewBox="0 0 11 13"><ellipse cx="5.5" cy="2.2" rx="5" ry="2" fill="#afb1b3"/><path d="M0.5 4 V11 C0.5 13.5 10.5 13.5 10.5 11 V4 C10.5 6 0.5 6 0.5 4Z" fill="#afb1b3"/><path d="M0.5 7 C0.5 9 10.5 9 10.5 7 M0.5 9.8 C0.5 11.8 10.5 11.8 10.5 9.8" stroke="#3c3f41" stroke-width="0.9" fill="none"/></svg>
<div class="a t" style="left:1324px;top:116px;width:60px;height:14px;line-height:14px;text-align:center;transform:rotate(90deg);color:#bbbbbb;font-size:11.8px">Database</div>
<div class="a" style="left:1348px;top:165px;font:italic bold 14px 'Liberation Serif',serif;color:#afb1b3;line-height:16px">m</div>
<div class="a t" style="left:1324px;top:196px;width:60px;height:14px;line-height:14px;text-align:center;transform:rotate(90deg);color:#bbbbbb;font-size:12px">Maven</div>

<div class="a" style="left:22px;top:467px;width:1322px;height:28px;background:#3c3f41"></div>
<div class="a" style="left:88px;top:492px;width:68px;height:3px;background:#8b8d8f"></div>
<svg class="a" style="left:137px;top:477px" width="8" height="8" viewBox="0 0 8 8"><path d="M0.5 0.5 L7.5 7.5 M7.5 0.5 L0.5 7.5" stroke="#6e7072" stroke-width="1.1"/></svg>
<svg class="a" style="left:165px;top:475px" width="11" height="11" viewBox="0 0 11 11"><path d="M5.5 0 V11 M0 5.5 H11" stroke="#c9c9c9" stroke-width="1.8"/></svg>
<svg class="a" style="left:1298px;top:474px" width="14" height="14" viewBox="0 0 14 14"><path d="M7 0 L8.5 0 L9 2.2 L10.8 3 L12.6 1.8 L13.7 2.9 L12.5 4.8 L13.2 6.5 L14 7 L14 8.4 L12 9 L11.2 10.8 L12.3 12.6 L11.2 13.7 L9.3 12.5 L7.6 13.2 L7 14 L5.6 14 L5 11.9 L3.2 11.2 L1.4 12.3 L0.3 11.2 L1.5 9.3 L0.8 7.6 L0 7 L0 5.6 L2.1 5 L2.8 3.2 L1.7 1.4 L2.8 0.3 L4.7 1.5 L6.4 0.8Z" fill="#afb1b3"/><circle cx="7" cy="7" r="2.4" fill="#3c3f41"/></svg>
<div class="a" style="left:1324px;top:480px;width:13px;height:2px;background:#afb1b3"></div>
<div class="a" style="left:22px;top:495px;width:1322px;height:191px;background:#2b2b2b"></div>
<div class="a" style="left:1335px;top:659px;width:8px;height:24px;background:#4a4c4e"></div>
<div class="a" style="left:186px;top:649px;width:10px;height:23px;border:1px solid #bbbbbb"></div>

<div class="a mono tm" style="left:26px;top:495px">[INFO] BUILD SUCCESS</div>
<div class="a mono tm" style="left:26px;top:517px">[INFO] ------------------------------------------------------------------------</div>
<div class="a mono tm" style="left:26px;top:539px">[INFO] Total time: 06:10 min</div>
<div class="a mono tm" style="left:26px;top:561px">[INFO] Finished at: 2022-06-28T10:26:31+08:00</div>
<div class="a mono tm" style="left:26px;top:583px">[INFO] Final Memory: 87M/1539M</div>
<div class="a mono tm" style="left:26px;top:605px">[INFO] ------------------------------------------------------------------------</div>
<div class="a mono tm" style="left:26px;top:649px">G:\learn\flinksql02&gt;</div>
<div class="a" style="left:0;top:686px;width:1364px;height:22px;background:#3c3f41"></div>
<div class="a" style="left:0;top:685px;width:1364px;height:1px;background:#323435"></div>
<div class="a" style="left:176px;top:686px;width:82px;height:21px;background:#2f3133"></div>
<svg class="a" style="left:33px;top:691px" width="11" height="11" viewBox="0 0 11 11"><path d="M0 1.5 H2 M0 5.5 H2 M0 9.5 H2 M3.5 1.5 H11 M3.5 5.5 H11 M3.5 9.5 H11" stroke="#afb1b3" stroke-width="1.6"/></svg>
<svg class="a" style="left:101px;top:690px" width="11" height="12" viewBox="0 0 11 12"><circle cx="5.5" cy="6" r="5.5" fill="#afb1b3"/><rect x="4.6" y="2.5" width="1.8" height="4.5" fill="#3c3f41"/><rect x="4.6" y="8" width="1.8" height="1.8" fill="#3c3f41"/></svg>
<svg class="a" style="left:188px;top:691px" width="11" height="11" viewBox="0 0 11 11"><rect x="0" y="0" width="11" height="11" fill="#afb1b3"/><path d="M2 2.5 L5 5 L2 7.5" stroke="#2f3133" stroke-width="1.3" fill="none"/><path d="M5.5 8.5 H9" stroke="#2f3133" stroke-width="1.3"/></svg>
<svg class="a" style="left:270px;top:689px" width="14" height="15" viewBox="0 0 14 15"><circle cx="6" cy="6.5" r="5.2" fill="none" stroke="#afb1b3" stroke-width="1.5"/><path d="M6 3.5 V7 L4 8.5" stroke="#afb1b3" stroke-width="1.3" fill="none"/><path d="M7 6 L14 10.5 L7 15Z" fill="#afb1b3"/></svg>
<svg class="a" style="left:344px;top:690px" width="14" height="13" viewBox="0 0 14 13"><path d="M1.5 3.5 L6 0.5 L7.5 2 L5 5 Z" fill="#afb1b3"/><path d="M4.5 4 L13 12" stroke="#afb1b3" stroke-width="2.6"/></svg>
<svg class="a" style="left:1265px;top:690px" width="13" height="13" viewBox="0 0 13 13"><path d="M1 12 V6.5 A5.5 5.5 0 1 1 6.5 12 Z" fill="none" stroke="#afb1b3" stroke-width="1.4"/></svg>

<div class="a" style="left:0;top:707px;width:1364px;height:1px;background:#323435"></div>
<div class="a" style="left:0;top:708px;width:1364px;height:20px;background:#3c3f41"></div>
<svg class="a" style="left:5px;top:711px" width="14" height="14" viewBox="0 0 14 14"><rect x="3.5" y="0.7" width="9.8" height="9.8" fill="none" stroke="#afb1b3" stroke-width="1.3"/><path d="M0.7 3.5 V13.3 H10.5" fill="none" stroke="#afb1b3" stroke-width="1.3"/></svg>
<svg class="a" style="left:1341px;top:711px" width="12" height="14" viewBox="0 0 12 14"><rect x="0" y="6" width="9" height="8" fill="#afb1b3"/><path d="M5 6 V3.5 A3 3 0 0 1 11 3.5 V5" stroke="#afb1b3" stroke-width="1.5" fill="none"/></svg>

<div class="a t" style="left:21px;top:2px;height:19px;line-height:19px;font:normal 13px/19px 'Liberation Sans',sans-serif;color:#000000;transform:scaleX(0.9915);transform-origin:0 0;">flinksql02 – LiveAuditReport.java</div>
<div class="a t" style="left:6px;top:22px;height:22px;line-height:22px;font:normal 13px/22px 'Liberation Sans',sans-serif;color:#bbbbbb;transform:scaleX(1.1454);transform-origin:0 0;">File</div>
<div class="a t" style="left:37px;top:22px;height:22px;line-height:22px;font:normal 13px/22px 'Liberation Sans',sans-serif;color:#bbbbbb;transform:scaleX(0.9819);transform-origin:0 0;">Edit</div>
<div class="a t" style="left:71px;top:22px;height:22px;line-height:22px;font:normal 13px/22px 'Liberation Sans',sans-serif;color:#bbbbbb;transform:scaleX(1.0732);transform-origin:0 0;">View</div>
<div class="a t" style="left:111px;top:22px;height:22px;line-height:22px;font:normal 13px/22px 'Liberation Sans',sans-serif;color:#bbbbbb;transform:scaleX(1.0134);transform-origin:0 0;">Navigate</div>
<div class="a t" style="left:176px;top:22px;height:22px;line-height:22px;font:normal 13px/22px 'Liberation Sans',sans-serif;color:#bbbbbb;transform:scaleX(0.9975);transform-origin:0 0;">Code</div>
<div class="a t" style="left:219px;top:22px;height:22px;line-height:22px;font:normal 13px/22px 'Liberation Sans',sans-serif;color:#bbbbbb;transform:scaleX(0.9514);transform-origin:0 0;">Analyze</div>
<div class="a t" style="left:276px;top:22px;height:22px;line-height:22px;font:normal 13px/22px 'Liberation Sans',sans-serif;color:#bbbbbb;transform:scaleX(0.9971);transform-origin:0 0;">Refactor</div>
<div class="a t" style="left:337px;top:22px;height:22px;line-height:22px;font:normal 13px/22px 'Liberation Sans',sans-serif;color:#bbbbbb;transform:scaleX(1.0027);transform-origin:0 0;">Build</div>
<div class="a t" style="left:378px;top:22px;height:22px;line-height:22px;font:normal 13px/22px 'Liberation Sans',sans-serif;color:#bbbbbb;transform:scaleX(0.9221);transform-origin:0 0;">Run</div>
<div class="a t" style="left:413px;top:22px;height:22px;line-height:22px;font:normal 13px/22px 'Liberation Sans',sans-serif;color:#bbbbbb;transform:scaleX(1.0540);transform-origin:0 0;">Tools</div>
<div class="a t" style="left:458px;top:22px;height:22px;line-height:22px;font:normal 13px/22px 'Liberation Sans',sans-serif;color:#bbbbbb;transform:scaleX(0.8603);transform-origin:0 0;">VCS</div>
<div class="a t" style="left:493px;top:22px;height:22px;line-height:22px;font:normal 13px/22px 'Liberation Sans',sans-serif;color:#bbbbbb;transform:scaleX(1.0162);transform-origin:0 0;">Window</div>
<div class="a t" style="left:552px;top:22px;height:22px;line-height:22px;font:normal 13px/22px 'Liberation Sans',sans-serif;color:#bbbbbb;transform:scaleX(1.0093);transform-origin:0 0;">Help</div>
<div class="a t" style="left:12px;top:47px;height:22px;line-height:22px;font:bold 13px/22px 'Liberation Sans',sans-serif;color:#cfcfcf;transform:scaleX(0.9922);transform-origin:0 0;">flinksql02</div>
<div class="a t" style="left:88px;top:47px;height:22px;line-height:22px;font:normal 13px/22px 'Liberation Sans',sans-serif;color:#bbbbbb;transform:scaleX(0.9802);transform-origin:0 0;">src</div>
<div class="a t" style="left:121.4px;top:47px;height:22px;line-height:22px;font:normal 13px/22px 'Liberation Sans',sans-serif;color:#bbbbbb;transform:scaleX(0.9685);transform-origin:0 0;">main</div>
<div class="a t" style="left:164.5px;top:47px;height:22px;line-height:22px;font:normal 13px/22px 'Liberation Sans',sans-serif;color:#bbbbbb;transform:scaleX(0.9598);transform-origin:0 0;">java</div>
<div class="a t" style="left:204px;top:47px;height:22px;line-height:22px;font:normal 13px/22px 'Liberation Sans',sans-serif;color:#bbbbbb;transform:scaleX(0.9771);transform-origin:0 0;">com</div>
<div class="a t" style="left:245.2px;top:47px;height:22px;line-height:22px;font:normal 13px/22px 'Liberation Sans',sans-serif;color:#bbbbbb;transform:scaleX(1.0315);transform-origin:0 0;">bigdata</div>
<div class="a t" style="left:306.5px;top:47px;height:22px;line-height:22px;font:normal 13px/22px 'Liberation Sans',sans-serif;color:#bbbbbb;transform:scaleX(0.9989);transform-origin:0 0;">flink</div>
<div class="a t" style="left:346px;top:47px;height:22px;line-height:22px;font:normal 13px/22px 'Liberation Sans',sans-serif;color:#bbbbbb;transform:scaleX(0.9705);transform-origin:0 0;">chap08</div>
<div class="a t" style="left:420.2px;top:47px;height:22px;line-height:22px;font:normal 13px/22px 'Liberation Sans',sans-serif;color:#bbbbbb;transform:scaleX(0.9892);transform-origin:0 0;">LiveAuditReport</div>
<div class="a t" style="left:544.7px;top:47px;height:22px;line-height:22px;font:normal 13px/22px 'Liberation Sans',sans-serif;color:#bbbbbb;transform:scaleX(0.9508);transform-origin:0 0;">main</div>
<div class="a t" style="left:1015px;top:47px;height:22px;line-height:22px;font:normal 13px/22px 'Liberation Sans',sans-serif;color:#bbbbbb;transform:scaleX(0.9946);transform-origin:0 0;">LiveAuditReport</div>
<div class="a t" style="left:50px;top:76px;height:20px;line-height:20px;font:normal 13px/20px 'Liberation Sans',sans-serif;color:#bbbbbb;transform:scaleX(0.9884);transform-origin:0 0;">Project</div>
<div class="a t" style="left:173.5px;top:99px;height:20px;line-height:20px;font:normal 13px/20px 'Liberation Sans',sans-serif;color:#bbbbbb;transform:scaleX(0.9612);transform-origin:0 0;">chap05</div>
<div class="a t" style="left:356px;top:76px;height:20px;line-height:20px;font:normal 13px/20px 'Liberation Sans',sans-serif;color:#bbbbbb;transform:scaleX(0.9753);transform-origin:0 0;">LiveAuditReport.java</div>
<div class="a t" style="left:524px;top:76px;height:20px;line-height:20px;font:normal 13px/20px 'Liberation Sans',sans-serif;color:#bbbbbb;transform:scaleX(0.9523);transform-origin:0 0;">FlinkSQLTumbleWinBaseEvTime.java</div>
<div class="a t" style="left:783.4px;top:76px;height:20px;line-height:20px;font:normal 13px/20px 'Liberation Sans',sans-serif;color:#bbbbbb;transform:scaleX(0.9385);transform-origin:0 0;">FlinkSQLKafka2MySQL.java</div>
<div class="a t" style="left:1290px;top:103px;height:20px;line-height:20px;font:normal 13px/20px 'Liberation Sans',sans-serif;color:#bbbbbb;">5</div>
<div class="a t" style="left:333.5px;top:101px;height:22px;line-height:22px;font:normal 13px/22px 'Liberation Mono',sans-serif;color:#606366;transform:scaleX(0.8008);transform-origin:0 0;">43</div>
<div class="a t" style="left:333.5px;top:123px;height:22px;line-height:22px;font:normal 13px/22px 'Liberation Mono',sans-serif;color:#606366;transform:scaleX(0.8008);transform-origin:0 0;">44</div>
<div class="a t" style="left:333.5px;top:145px;height:22px;line-height:22px;font:normal 13px/22px 'Liberation Mono',sans-serif;color:#606366;transform:scaleX(0.8008);transform-origin:0 0;">45</div>
<div class="a t" style="left:333.5px;top:167px;height:22px;line-height:22px;font:normal 13px/22px 'Liberation Mono',sans-serif;color:#606366;transform:scaleX(0.8008);transform-origin:0 0;">46</div>
<div class="a t" style="left:333.5px;top:189px;height:22px;line-height:22px;font:normal 13px/22px 'Liberation Mono',sans-serif;color:#606366;transform:scaleX(0.8008);transform-origin:0 0;">47</div>
<div class="a t" style="left:333.5px;top:211px;height:22px;line-height:22px;font:normal 13px/22px 'Liberation Mono',sans-serif;color:#606366;transform:scaleX(0.8008);transform-origin:0 0;">48</div>
<div class="a t" style="left:333.5px;top:233px;height:22px;line-height:22px;font:normal 13px/22px 'Liberation Mono',sans-serif;color:#606366;transform:scaleX(0.8008);transform-origin:0 0;">49</div>
<div class="a t" style="left:333.5px;top:255px;height:22px;line-height:22px;font:normal 13px/22px 'Liberation Mono',sans-serif;color:#606366;transform:scaleX(0.8008);transform-origin:0 0;">50</div>
<div class="a t" style="left:333.5px;top:277px;height:22px;line-height:22px;font:normal 13px/22px 'Liberation Mono',sans-serif;color:#a4a3a3;transform:scaleX(0.8008);transform-origin:0 0;">51</div>
<div class="a t" style="left:333.5px;top:299px;height:22px;line-height:22px;font:normal 13px/22px 'Liberation Mono',sans-serif;color:#606366;transform:scaleX(0.8008);transform-origin:0 0;">52</div>
<div class="a t" style="left:333.5px;top:321px;height:22px;line-height:22px;font:normal 13px/22px 'Liberation Mono',sans-serif;color:#606366;transform:scaleX(0.8008);transform-origin:0 0;">53</div>
<div class="a t" style="left:333.5px;top:343px;height:22px;line-height:22px;font:normal 13px/22px 'Liberation Mono',sans-serif;color:#606366;transform:scaleX(0.8008);transform-origin:0 0;">54</div>
<div class="a t" style="left:333.5px;top:365px;height:22px;line-height:22px;font:normal 13px/22px 'Liberation Mono',sans-serif;color:#606366;transform:scaleX(0.8008);transform-origin:0 0;">55</div>
<div class="a t" style="left:333.5px;top:387px;height:22px;line-height:22px;font:normal 13px/22px 'Liberation Mono',sans-serif;color:#606366;transform:scaleX(0.8008);transform-origin:0 0;">56</div>
<div class="a t" style="left:590px;top:191px;height:17px;line-height:17px;font:normal 11px/17px 'Liberation Sans',sans-serif;color:#8a8a8a;">s:</div>
<div class="a t" style="left:28px;top:472px;height:20px;line-height:20px;font:normal 13px/20px 'Liberation Sans',sans-serif;color:#bbbbbb;transform:scaleX(1.0047);transform-origin:0 0;">Terminal:</div>
<div class="a t" style="left:100px;top:472px;height:20px;line-height:20px;font:normal 13px/20px 'Liberation Sans',sans-serif;color:#bbbbbb;transform:scaleX(0.9331);transform-origin:0 0;">Local</div>
<div class="a t" style="left:48px;top:688px;height:20px;line-height:20px;font:normal 13px/20px 'Liberation Sans',sans-serif;color:#bbbbbb;transform:scaleX(0.8305);transform-origin:0 0;">TODO</div>
<div class="a t" style="left:117px;top:688px;height:20px;line-height:20px;font:normal 13px/20px 'Liberation Sans',sans-serif;color:#bbbbbb;transform:scaleX(0.8740);transform-origin:0 0;">Problems</div>
<div class="a t" style="left:204px;top:688px;height:20px;line-height:20px;font:normal 13px/20px 'Liberation Sans',sans-serif;color:#e8e8e8;transform:scaleX(0.8957);transform-origin:0 0;">Terminal</div>
<div class="a t" style="left:287px;top:688px;height:20px;line-height:20px;font:normal 13px/20px 'Liberation Sans',sans-serif;color:#bbbbbb;transform:scaleX(0.9226);transform-origin:0 0;">Profiler</div>
<div class="a t" style="left:361px;top:688px;height:20px;line-height:20px;font:normal 13px/20px 'Liberation Sans',sans-serif;color:#bbbbbb;transform:scaleX(0.9335);transform-origin:0 0;">Build</div>
<div class="a t" style="left:1281px;top:688px;height:20px;line-height:20px;font:normal 13px/20px 'Liberation Sans',sans-serif;color:#bbbbbb;transform:scaleX(0.8882);transform-origin:0 0;">Event Log</div>
<div class="a t" style="left:27px;top:708px;height:20px;line-height:20px;font:normal 13px/20px 'Liberation Sans',sans-serif;color:#bbbbbb;transform:scaleX(1.0251);transform-origin:0 0;">File pattern &#x27;*.apk&#x27; (from &#x27;bundled&#x27; plugin) was reassigned to file type &#x27;APK&#x27; by &#x27;Android&#x27; plugin: You can confirm or revert reassigning pattern &#x27;*.apk&#x27; // Confirm reassign this pattern to file type &#x27;APK&#x27; ... (today 9:39)</div>
<div class="a t" style="left:1299px;top:708px;height:20px;line-height:20px;font:normal 13px/20px 'Liberation Sans',sans-serif;color:#bbbbbb;transform:scaleX(0.9525);transform-origin:0 0;">51:34</div>
</body></html>
